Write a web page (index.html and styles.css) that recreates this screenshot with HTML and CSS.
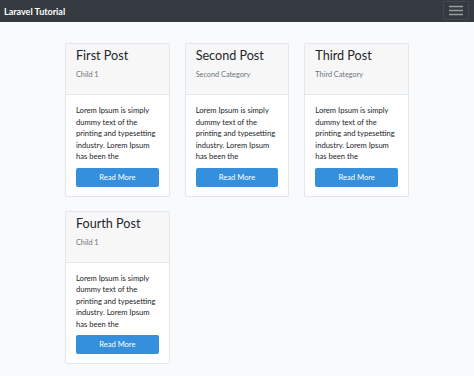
FILE: index.html
```html
<!DOCTYPE html>
<html lang="en">
<head>
    <meta charset="UTF-8">
    <meta name="viewport" content="width=device-width, initial-scale=1.0">
    <title>Laravel Tutorial</title>
    <link rel="stylesheet" href="styles.css">
</head>
<body>
    <nav class="navbar">
        <a class="brand" href="#">Laravel Tutorial</a>
        <button class="toggler" type="button" aria-label="Toggle navigation">
            <svg width="14" height="11" viewBox="0 0 14 11">
                <path d="M0 1.5h14M0 5.5h14M0 9.5h14" stroke="rgba(255,255,255,0.5)" stroke-width="1.3"/>
            </svg>
        </button>
    </nav>

    <main class="container">
        <div class="post-grid">
            <div class="card">
                <div class="card-header">
                    <h2>First Post</h2>
                    <p class="category">Child 1</p>
                </div>
                <div class="card-body">
                    <p>Lorem Ipsum is simply dummy text of the printing and typesetting industry. Lorem Ipsum has been the</p>
                    <a class="btn" href="#">Read More</a>
                </div>
            </div>
            <div class="card">
                <div class="card-header">
                    <h2>Second Post</h2>
                    <p class="category">Second Category</p>
                </div>
                <div class="card-body">
                    <p>Lorem Ipsum is simply dummy text of the printing and typesetting industry. Lorem Ipsum has been the</p>
                    <a class="btn" href="#">Read More</a>
                </div>
            </div>
            <div class="card">
                <div class="card-header">
                    <h2>Third Post</h2>
                    <p class="category">Third Category</p>
                </div>
                <div class="card-body">
                    <p>Lorem Ipsum is simply dummy text of the printing and typesetting industry. Lorem Ipsum has been the</p>
                    <a class="btn" href="#">Read More</a>
                </div>
            </div>
            <div class="card">
                <div class="card-header">
                    <h2>Fourth Post</h2>
                    <p class="category">Child 1</p>
                </div>
                <div class="card-body">
                    <p>Lorem Ipsum is simply dummy text of the printing and typesetting industry. Lorem Ipsum has been the</p>
                    <a class="btn" href="#">Read More</a>
                </div>
            </div>
        </div>
    </main>
</body>
</html>
```

FILE: styles.css
```css
:root {
    --dark: #343a40;
    --body-bg: #f8fafc;
    --border-color: #e3e6ea;
    --header-bg: #f7f7f7;
    --text-color: #212529;
    --muted: #6c757d;
    --primary: #3490dc;
}

* {
    box-sizing: border-box;
}

body {
    margin: 0;
    font-family: Lato, "Open Sans", sans-serif;
    color: var(--text-color);
    background-color: var(--body-bg);
}

.navbar {
    height: 22px;
    background: var(--dark);
    display: flex;
    align-items: center;
    justify-content: space-between;
    padding: 0 5px 0 4px;
}

.brand {
    color: #fff;
    text-decoration: none;
    font-size: 9px;
    font-weight: 700;
}

.toggler {
    width: 26px;
    height: 19px;
    margin-top: -2px;
    padding: 0;
    display: flex;
    align-items: center;
    justify-content: center;
    background: transparent;
    border: 1px solid rgba(255, 255, 255, 0.08);
    border-radius: 2px;
}

.container {
    width: 344px;
    margin: 0 auto;
    padding-top: 21px;
}

.post-grid {
    display: grid;
    grid-template-columns: repeat(3, 1fr);
    column-gap: 15px;
    row-gap: 14px;
}

.card {
    background: #fff;
    border: 1px solid var(--border-color);
    border-radius: 2px;
}

.card-header {
    background: var(--header-bg);
    border-bottom: 1px solid var(--border-color);
    padding: 4px 10px 14px;
}

.card-header h2 {
    margin: 0 0 5px;
    font-size: 12.6px;
    line-height: 16px;
    font-weight: 400;
}

.category {
    margin: 0;
    font-size: 7.3px;
    line-height: 11px;
    color: var(--muted);
}

.card-body {
    padding: 10px 10px 9px;
}

.card-body p {
    margin: 0 0 5px;
    font-size: 7.6px;
    line-height: 11.5px;
}

.btn {
    display: block;
    height: 19px;
    line-height: 19px;
    text-align: center;
    background: var(--primary);
    color: #fff;
    font-size: 7.6px;
    text-decoration: none;
    border-radius: 2px;
}
```
